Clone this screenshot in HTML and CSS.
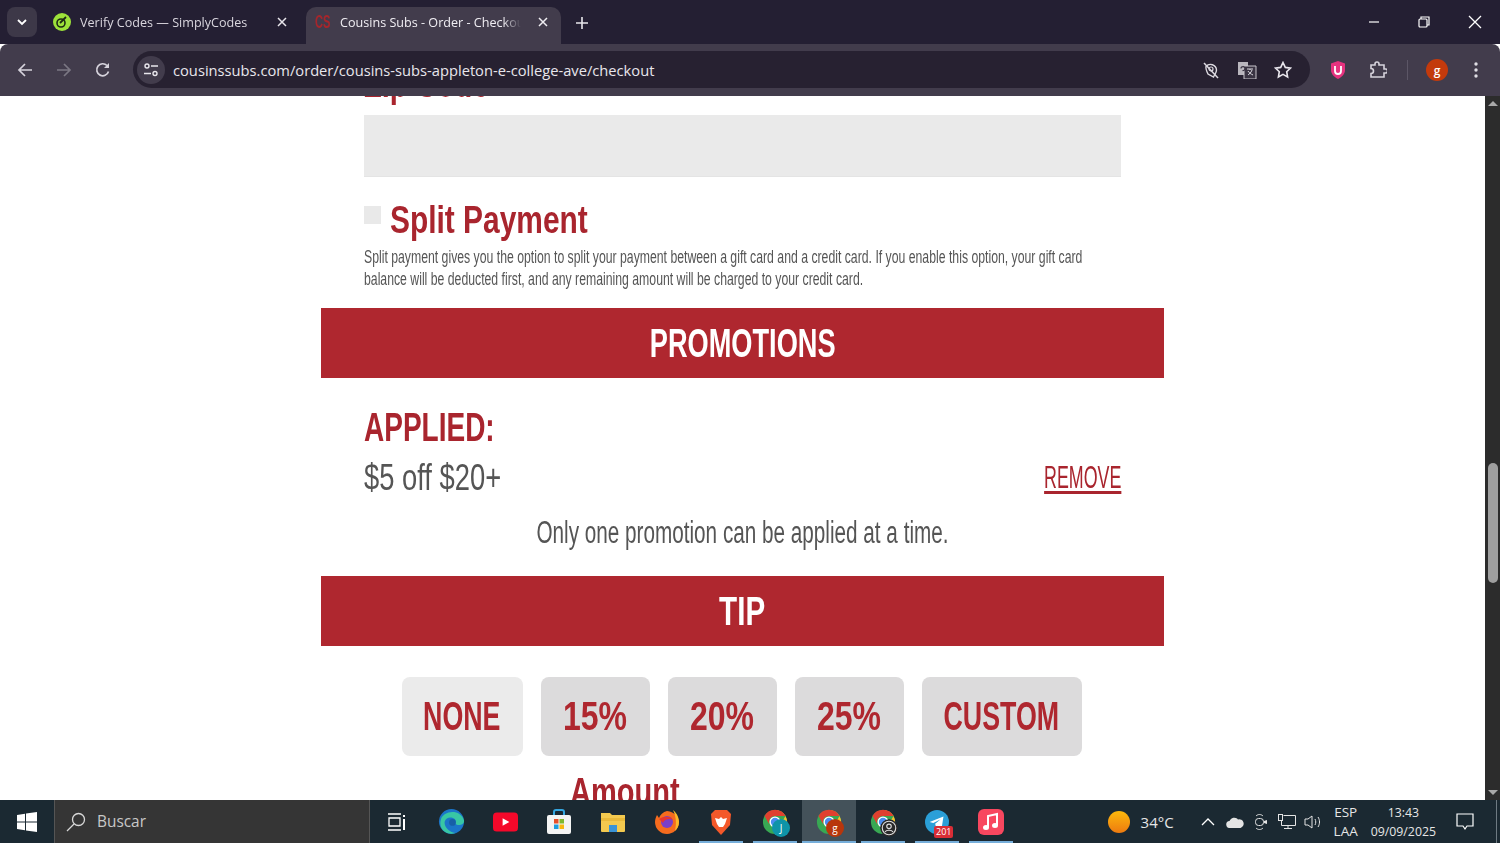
FILE: index.html
```html
<!DOCTYPE html>
<html lang="en">
<head>
    <meta charset="UTF-8">
    <meta name="viewport" content="width=device-width, initial-scale=1.0">
    <title>Cousins Subs - Order - Checkout</title>
    <link rel="stylesheet" href="styles.css">
</head>
<body>
    <div class="tabstrip">
        <div class="tab-search">
            <svg width="12" height="12" viewBox="0 0 12 12"><path d="M2 4l4 4 4-4" fill="none" stroke="#fff" stroke-width="1.8"/></svg>
        </div>
        <div class="tab">
            <svg class="tab-icon" width="18" height="18" viewBox="0 0 18 18"><circle cx="9" cy="9" r="9" fill="#9de23a"/><circle cx="8" cy="10" r="4" fill="none" stroke="#1d2a14" stroke-width="1.6"/><path d="M7 10l6-6" stroke="#1d2a14" stroke-width="1.8"/></svg>
            <span class="tab-title">Verify Codes — SimplyCodes</span>
            <svg class="tab-close" width="10" height="10" viewBox="0 0 10 10"><path d="M1 1l8 8M9 1l-8 8" stroke="#e8e6ec" stroke-width="1.5"/></svg>
        </div>
        <div class="tab tab-active">
            <span class="tab-favicon"><span class="favicon-text">CS</span></span>
            <span class="tab-title">Cousins Subs - Order - Checkout</span>
            <svg class="tab-close" width="10" height="10" viewBox="0 0 10 10"><path d="M1 1l8 8M9 1l-8 8" stroke="#f0eef3" stroke-width="1.5"/></svg>
        </div>
        <svg class="new-tab" width="12" height="12" viewBox="0 0 12 12"><path d="M6 0v12M0 6h12" stroke="#e8e6ec" stroke-width="1.6"/></svg>
        <div class="window-controls">
            <svg width="12" height="12" viewBox="0 0 12 12"><path d="M1 6h10" stroke="#fff" stroke-width="1.2"/></svg>
            <svg width="12" height="12" viewBox="0 0 12 12"><path d="M3 3V1h8v8H9" fill="none" stroke="#fff" stroke-width="1.2"/><rect x="1" y="3" width="8" height="8" rx="1" fill="none" stroke="#fff" stroke-width="1.2"/></svg>
            <svg width="14" height="14" viewBox="0 0 14 14"><path d="M1 1l12 12M13 1L1 13" stroke="#fff" stroke-width="1.3"/></svg>
        </div>
    </div>

    <div class="toolbar">
        <div class="nav-buttons">
            <svg width="16" height="16" viewBox="0 0 16 16"><path d="M15 8H2M8 2L2 8l6 6" fill="none" stroke="#d6d3dc" stroke-width="1.7"/></svg>
            <svg width="16" height="16" viewBox="0 0 16 16"><path d="M1 8h13M8 2l6 6-6 6" fill="none" stroke="#7b7783" stroke-width="1.7"/></svg>
            <svg width="16" height="16" viewBox="0 0 16 16"><path d="M13.5 9.5A6 6 0 1 1 12 3.5" fill="none" stroke="#d6d3dc" stroke-width="1.7"/><path d="M14 1v5H9z" fill="#d6d3dc"/></svg>
        </div>
        <div class="omnibox">
            <div class="site-info">
                <svg width="16" height="16" viewBox="0 0 16 16"><circle cx="4" cy="4" r="2" fill="none" stroke="#e8e6ec" stroke-width="1.4"/><path d="M8 4h7M1 11.5h7" stroke="#e8e6ec" stroke-width="1.4"/><circle cx="12" cy="11.5" r="2" fill="none" stroke="#e8e6ec" stroke-width="1.4"/></svg>
            </div>
            <span class="url">cousinssubs.com/order/cousins-subs-appleton-e-college-ave/checkout</span>
            <div class="omni-icons">
                <svg width="18" height="18" viewBox="0 0 18 18"><path d="M4 5.5A6 6 0 0 1 14.5 9c0 3-2 4.500-3 7L6 13C5 11 3.500 8 4 5.500z" fill="none" stroke="#dcd9e0" stroke-width="1.4"/><circle cx="9" cy="8" r="2" fill="none" stroke="#dcd9e0" stroke-width="1.2"/><path d="M2 2l14 15" stroke="#dcd9e0" stroke-width="1.5"/></svg>
                <svg width="20" height="18" viewBox="0 0 20 18"><path d="M1 1h10v13H1z" fill="#b9b6bd"/><path d="M7 5h12v13H7z" fill="#3a3443" stroke="#c9c6cd" stroke-width="1"/><path d="M4 7.500a2 2 0 1 1 1.500 2" fill="none" stroke="#3a3443" stroke-width="1.2"/><path d="M10 8h6M13 8v1M15 9c-1 3-3 4-4 5M11 10c1 2 3 3 5 4" fill="none" stroke="#dcd9e0" stroke-width="1"/></svg>
                <svg width="18" height="18" viewBox="0 0 18 18"><path d="M9 1.500l2.300 4.900 5.200.7-3.800 3.600.9 5.300L9 13.400 4.400 16l.9-5.300L1.500 7.100l5.200-.7z" fill="none" stroke="#e8e6ec" stroke-width="1.6"/></svg>
            </div>
        </div>
        <div class="extensions">
            <svg class="ext-shield" width="16" height="18" viewBox="0 0 16 18"><path d="M8 0l7 2.500V9c0 4-3 7-7 9-4-2-7-5-7-9V2.500z" fill="#e6337f"/><path d="M5 5v5a3 3 0 0 0 6 0V5" fill="none" stroke="#fff" stroke-width="1.800"/></svg>
            <svg class="ext-puzzle" width="18" height="18" viewBox="0 0 18 18"><path d="M2 4h4V3a2 2 0 0 1 4 0v1h5v4h1.500a2 2 0 0 1 0 4H15v4H2v-3.500a2 2 0 0 0 0-5z" fill="none" stroke="#d6d3dc" stroke-width="1.600"/></svg>
            <span class="ext-divider"></span>
            <span class="avatar">g</span>
            <svg class="menu-dots" width="4" height="16" viewBox="0 0 4 16"><circle cx="2" cy="2" r="1.700" fill="#e0dee4"/><circle cx="2" cy="8" r="1.700" fill="#e0dee4"/><circle cx="2" cy="14" r="1.700" fill="#e0dee4"/></svg>
        </div>
    </div>

    <div class="viewport">
        <div class="page">
            <div class="checkout">
                <div class="section">
                    <h3 class="field-label"><span class="narrow">Zip Code</span></h3>
                    <div class="text-input"></div>
                    <div class="split-row">
                        <span class="checkbox"></span>
                        <span class="split-title narrow">Split Payment</span>
                    </div>
                    <p class="split-note">Split payment gives you the option to split your payment between a gift card and a credit card. If you enable this option, your gift card balance will be deducted first, and any remaining amount will be charged to your credit card.</p>
                </div>

                <h2 class="band"><span class="band-text band-promo">PROMOTIONS</span></h2>
                <div class="section promo">
                    <h3 class="applied"><span class="applied-text">APPLIED:</span></h3>
                    <div class="promo-row">
                        <span class="promo-name">$5 off $20+</span>
                        <a class="remove" href="#">REMOVE</a>
                    </div>
                    <p class="promo-note"><span class="promo-note-text">Only one promotion can be applied at a time.</span></p>
                </div>

                <h2 class="band"><span class="band-text band-tip">TIP</span></h2>
                <div class="tip-options">
                    <button class="tip tip-none"><span class="tip-word">NONE</span></button>
                    <button class="tip tip-pct"><span class="tip-num">15%</span></button>
                    <button class="tip tip-pct"><span class="tip-num">20%</span></button>
                    <button class="tip tip-pct"><span class="tip-num">25%</span></button>
                    <button class="tip tip-custom"><span class="tip-word">CUSTOM</span></button>
                </div>
                <div class="amount-label"><span class="narrow">Amount</span></div>
            </div>
        </div>
        <div class="scrollbar">
            <span class="arrow-up"></span>
            <div class="scroll-track"><div class="scroll-thumb"></div></div>
            <span class="arrow-down"></span>
        </div>
    </div>

    <div class="taskbar">
        <div class="start">
            <svg width="20" height="20" viewBox="0 0 20 20"><path d="M0 3l8-1.200V9.500H0zM9 1.600L20 0v9.500H9zM0 10.500h8v7.700L0 17zM9 10.500h11V20L9 18.400z" fill="#fff"/></svg>
        </div>
        <div class="search">
            <svg width="20" height="20" viewBox="0 0 20 20"><circle cx="12.500" cy="7.500" r="6" fill="none" stroke="#d8d8d8" stroke-width="1.300"/><path d="M8 12l-7 7" stroke="#d8d8d8" stroke-width="1.300"/></svg>
            <span>Buscar</span>
        </div>
        <div class="task-item">
            <svg width="20" height="18" viewBox="0 0 20 18"><path d="M1 1h13M1 17h13M2 5h11v8H2z" fill="none" stroke="#fff" stroke-width="1.300"/><path d="M17 2v2M17 6v11" stroke="#fff" stroke-width="2"/></svg>
        </div>
        <div class="task-item">
            <svg width="27" height="27" viewBox="0 0 28 28"><circle cx="14" cy="14" r="13" fill="#1b75c9"/><path d="M3 12C5 3 23 0 27 13c.5 5-7 6-9 3 3-6-9-9-11-2-1 5 4 11 11 12C9 29 0 22 3 12z" fill="#38c6a4"/><circle cx="15" cy="15" r="3.500" fill="#175fa8"/></svg>
        </div>
        <div class="task-item">
            <svg width="25" height="20" viewBox="0 0 26 20"><rect width="26" height="20" rx="4" fill="#f5082a"/><path d="M10 6l7 4-7 4z" fill="#fff"/></svg>
        </div>
        <div class="task-item">
            <svg width="26" height="26" viewBox="0 0 26 26"><path d="M8 6V3a2 2 0 0 1 2-2h6a2 2 0 0 1 2 2v3" fill="none" stroke="#35a6e0" stroke-width="2"/><rect x="1" y="6" width="24" height="19" rx="2" fill="#f4f4f4"/><rect x="8" y="10" width="4.500" height="4.500" fill="#e8502a"/><rect x="13.500" y="10" width="4.500" height="4.500" fill="#7db92e"/><rect x="8" y="15.500" width="4.500" height="4.500" fill="#1f9de0"/><rect x="13.500" y="15.500" width="4.500" height="4.500" fill="#f6b80f"/></svg>
        </div>
        <div class="task-item">
            <svg width="24" height="22" viewBox="0 0 24 22"><path d="M0 2h9l2 2h13v16a1 1 0 0 1-1 1H1a1 1 0 0 1-1-1z" fill="#f3c94f"/><path d="M0 7h24v3H0z" fill="#e9b93a"/><path d="M8 14h8v7H8z" fill="#3a93d6"/></svg>
        </div>
        <div class="task-item">
            <svg width="26" height="26" viewBox="0 0 26 26"><path d="M13 25A12 12 0 0 1 1 13c0-3 1-5 2-7l2 3c1-3 4-6 8-7 8 1 12 6 12 12a12 12 0 0 1-12 11z" fill="#f66c1e"/><path d="M19 1c5 4 6 9 6 12 0 4-2 7-4 9 1-5 2-13-2-21z" fill="#fbb829"/><circle cx="13" cy="13" r="6" fill="#7b3fc9"/><path d="M5 10c5-3 12-3 14 1-3-2-9-1-10 3z" fill="#e8352f"/></svg>
        </div>
        <div class="task-item">
            <svg width="22" height="26" viewBox="0 0 22 26"><path d="M5 1h12l4 4-1 11-9 10-9-10L1 5z" fill="#f4582a"/><path d="M5 9l4 1 2-2 2 2 4-1-2 6-2 3h-4l-2-3z" fill="#fff"/><path d="M9 19h4l-2 2z" fill="#f4582a"/></svg>
        </div>
        <div class="task-item">
            <svg class="chrome" width="26" height="26" viewBox="0 0 28 28"><use href="#chrome-logo"/></svg>
            <span class="app-badge badge-j">J</span>
        </div>
        <div class="task-item task-active">
            <svg class="chrome" width="26" height="26" viewBox="0 0 28 28"><use href="#chrome-logo"/></svg>
            <span class="app-badge badge-g">g</span>
        </div>
        <div class="task-item">
            <svg class="chrome" width="26" height="26" viewBox="0 0 28 28"><use href="#chrome-logo"/></svg>
            <svg class="app-badge badge-person" viewBox="0 0 16 16"><circle cx="8" cy="8" r="8" fill="#2a2a2a"/><circle cx="8" cy="8" r="6" fill="none" stroke="#ddd"/><circle cx="8" cy="6.500" r="2" fill="none" stroke="#ddd"/><path d="M4.500 11.500c1-2 6-2 7 0" fill="none" stroke="#ddd"/></svg>
        </div>
        <div class="task-item">
            <svg width="24" height="24" viewBox="0 0 26 26"><circle cx="13" cy="13" r="13" fill="#2a9fd8"/><path d="M5 13l15-6-2 13-4-3-2 2-1-4 6-5-8 4z" fill="#fff"/></svg>
            <span class="count-badge">201</span>
        </div>
        <div class="task-item">
            <svg width="26" height="26" viewBox="0 0 26 26"><rect width="26" height="26" rx="6" fill="#f8475f"/><path d="M10 18V7l9-2v11" fill="none" stroke="#fff" stroke-width="2"/><ellipse cx="8" cy="18.500" rx="3" ry="2.500" fill="#fff"/><ellipse cx="17" cy="16.500" rx="3" ry="2.500" fill="#fff"/></svg>
        </div>

        <div class="tray">
            <span class="weather-sun"></span>
            <span class="weather-temp">34°C</span>
            <svg class="tray-chevron" width="14" height="8" viewBox="0 0 14 8"><path d="M1 7l6-6 6 6" fill="none" stroke="#fff" stroke-width="1.300"/></svg>
            <svg class="tray-icon" width="18" height="12" viewBox="0 0 18 12"><path d="M4 12a3.500 3.500 0 0 1-.5-7A5 5 0 0 1 12 3.500 4 4 0 0 1 14.500 12z" fill="#e4e4e4"/></svg>
            <svg class="tray-icon" width="14" height="18" viewBox="0 0 14 18"><path d="M2 3c2-2 5-2 7 0M2 15c2 2 5 2 7 0" fill="none" stroke="#e4e4e4"/><rect x="1.500" y="5.500" width="8" height="7" rx="3" fill="none" stroke="#e4e4e4"/><path d="M10 8l3-1v4l-3-1z" fill="#e4e4e4"/></svg>
            <svg class="tray-icon" width="18" height="16" viewBox="0 0 18 16"><path d="M5.500 1.500h12v10h-14V7M10 11.500v3M6 14.500h8" fill="none" stroke="#e4e4e4"/><rect x=".5" y=".5" width="4" height="6" fill="#1b2932" stroke="#e4e4e4"/></svg>
            <svg class="tray-icon tray-volume" width="18" height="16" viewBox="0 0 18 16"><path d="M1 5h3l4-3v12l-4-3H1zM11 5c1 2 1 4 0 6M14 3c2 3 2 7 0 10" fill="none" stroke="#e4e4e4"/></svg>
            <div class="tray-lang"><span>ESP</span><span>LAA</span></div>
            <div class="tray-clock"><span>13:43</span><span>09/09/2025</span></div>
            <svg class="tray-notify" width="18" height="18" viewBox="0 0 18 18"><path d="M1 1h16v12h-6l-2 3-2-3H1z" fill="none" stroke="#fff" stroke-width="1.200"/></svg>
            <span class="show-desktop"></span>
        </div>
    </div>

    <svg class="svg-defs" width="0" height="0">
        <defs>
            <g id="chrome-logo">
                <circle cx="14" cy="14" r="13" fill="#38a853"/>
                <path d="M14 1a13 13 0 0 1 11.300 6.500H14z" fill="#f2c230"/>
                <path d="M25.300 7.500A13 13 0 0 1 15 27l5-10z" fill="#f2c230"/>
                <path d="M2.700 7.500A13 13 0 0 1 25.300 7.500H14a6.500 6.500 0 0 0-5.700 9.700z" fill="#e0402f"/>
                <circle cx="14" cy="14" r="6" fill="#fff"/>
                <circle cx="14" cy="14" r="4.500" fill="#4a8df0"/>
            </g>
        </defs>
    </svg>
</body>
</html>
```
FILE: styles.css
```css
* {
    box-sizing: border-box;
}
html, body {
    height: 100%;
}
body {
    margin: 0;
    display: flex;
    flex-direction: column;
    overflow: hidden;
    font-family: "Liberation Sans", sans-serif;
    background: #fff;
}
.svg-defs {
    position: absolute;
}

/* browser tabs */
.tabstrip {
    height: 44px;
    flex: none;
    display: flex;
    align-items: flex-end;
    background: #241f33;
    font-family: "Open Sans", sans-serif;
    font-size: 12.6px;
    color: #d9d6de;
}
.tab-search {
    width: 30px;
    height: 30px;
    margin: 0 7px 7px 7px;
    border-radius: 8px;
    background: #3d3848;
    display: flex;
    align-items: center;
    justify-content: center;
}
.tab {
    width: 262px;
    height: 37px;
    padding: 0 19px 7px 9px;
    display: flex;
    align-items: center;
    gap: 9px;
}
.tab-active {
    width: 255px;
    padding-right: 13px;
    background: #423c4c;
    border-radius: 10px 10px 0 0;
    color: #f0eef3;
}
.tab-title {
    flex: 1;
    white-space: nowrap;
    overflow: hidden;
    mask-image: linear-gradient(to right, #000 90%, transparent);
}
.tab-active .tab-title {
    margin-right: 8px;
}
.tab-favicon {
    width: 16px;
    flex: none;
    font-family: "Liberation Sans", sans-serif;
    font-size: 18px;
    font-weight: 700;
    color: #a5262c;
}
.favicon-text {
    display: inline-block;
    transform: scaleX(.62);
    transform-origin: left;
}
.new-tab {
    margin: 0 0 15px 15px;
}
.window-controls {
    margin-left: auto;
    height: 44px;
    width: 132px;
    padding-right: 18px;
    display: flex;
    align-items: center;
    justify-content: space-between;
}

/* address bar */
.toolbar {
    height: 52px;
    flex: none;
    display: flex;
    align-items: center;
    background: #423c4c;
    border-radius: 8px 8px 0 0;
}
.nav-buttons {
    width: 133px;
    padding: 0 22px 0 17px;
    display: flex;
    justify-content: space-between;
}
.omnibox {
    width: 1177px;
    height: 37px;
    margin-bottom: 1px;
    padding: 0 18px 0 4px;
    border-radius: 19px;
    background: #272131;
    display: flex;
    align-items: center;
}
.site-info {
    width: 28px;
    height: 28px;
    border-radius: 50%;
    background: #423c4c;
    display: flex;
    align-items: center;
    justify-content: center;
}
.url {
    margin-left: 8px;
    font-family: "Open Sans", sans-serif;
    font-size: 14.7px;
    color: #e8e6ec;
}
.omni-icons {
    margin-left: auto;
    display: flex;
    align-items: center;
    gap: 17px;
}
.extensions {
    flex: 1;
    display: flex;
    align-items: center;
    padding-left: 20px;
}
.ext-puzzle {
    margin-left: 23px;
}
.ext-divider {
    width: 1px;
    height: 20px;
    background: #5c5666;
    margin: 0 18px 0 20px;
}
.avatar {
    width: 22px;
    height: 22px;
    border-radius: 50%;
    background: #c33a0c;
    color: #fff;
    font-family: "Open Sans", sans-serif;
    font-size: 12px;
    font-weight: 600;
    display: flex;
    align-items: center;
    justify-content: center;
}
.menu-dots {
    margin-left: 26px;
}

/* page, the site's condensed face is made by squeezing Liberation Sans */
.viewport {
    height: 704px;
    flex: none;
    display: flex;
    overflow: hidden;
}
.page {
    flex: 1;
    overflow: hidden;
    display: flex;
    justify-content: center;
}
.checkout {
    width: 843px;
    margin-top: -36px;
}
.section {
    padding: 0 43px;
}
.narrow {
    display: inline-block;
    white-space: nowrap;
    transform: scaleX(.765);
    transform-origin: left;
}
.field-label {
    margin: 0 0 6px;
    height: 49px;
    font-size: 38px;
    line-height: 49px;
    font-weight: 700;
    color: #a9252e;
}
.text-input {
    height: 62px;
    background: #eaeaea;
    border-bottom: 1px solid #e4e4e4;
}
.split-row {
    display: flex;
    align-items: center;
    gap: 9px;
    margin-top: 18px;
    height: 50px;
}
.checkbox {
    width: 17px;
    height: 18px;
    margin-top: -10px;
    background: #e9e9e9;
}
.split-title {
    font-size: 38px;
    font-weight: 700;
    color: #a9252e;
    transform: scaleX(.787);
}
.split-note {
    margin: 0;
    padding-top: 1px;
    width: 1060px;
    font-size: 17.5px;
    line-height: 22px;
    color: #555;
    transform: scaleX(.7);
    transform-origin: left;
}
.band {
    margin: 0;
    height: 70px;
    background: #af272f;
    color: #fff;
    font-size: 40px;
    line-height: 70px;
    font-weight: 700;
    text-align: center;
}
.checkout .band:first-of-type {
    margin-top: 18px;
}
.band-text {
    display: inline-block;
}
.band-promo {
    transform: scaleX(.68);
}
.band-tip {
    transform: scaleX(.74);
}
.applied {
    margin: 0;
    padding-top: 26px;
    font-size: 40px;
    line-height: 46px;
    color: #a9252e;
}
.applied-text {
    display: inline-block;
    transform: scaleX(.7);
    transform-origin: left;
}
.promo-row {
    display: flex;
    justify-content: space-between;
    align-items: center;
    height: 50px;
    margin-top: 3px;
    color: #555;
}
.promo-name {
    font-size: 36px;
    transform: scaleX(.76);
    transform-origin: left;
}
.remove {
    font-size: 31px;
    color: #a9252e;
    text-underline-offset: 3px;
    transform: scaleX(.575);
    transform-origin: right;
}
.promo-note {
    margin: 8px 0 21px;
    height: 44px;
    line-height: 44px;
    text-align: center;
    font-size: 31px;
    color: #555;
}
.promo-note-text {
    display: inline-block;
    white-space: nowrap;
    transform: scaleX(.668);
}
.tip-options {
    display: flex;
    justify-content: center;
    gap: 18px;
    margin-top: 31px;
    padding-right: 2px;
}
.tip {
    height: 79px;
    padding: 0;
    border: none;
    border-radius: 8px;
    background: #dcdbdc;
    color: #af272f;
    font-family: inherit;
    font-size: 40px;
    font-weight: 700;
    display: flex;
    align-items: center;
    justify-content: center;
}
.tip span {
    flex: none;
}
.tip-word {
    transform: scaleX(.67);
}
.tip-num {
    transform: scaleX(.8);
}
.tip-none {
    width: 121px;
    background: #ebebeb;
}
.tip-pct {
    width: 109px;
}
.tip-custom {
    width: 160px;
}
.amount-label {
    width: 500px;
    margin: 15px 0 0 249px;
    font-size: 38px;
    font-weight: 700;
    color: #a9252e;
}

/* page scrollbar */
.scrollbar {
    width: 15px;
    flex: none;
    display: flex;
    flex-direction: column;
    align-items: center;
    background: #2c2c2c;
}
.arrow-up, .arrow-down {
    width: 0;
    height: 0;
    flex: none;
    border-left: 5px solid transparent;
    border-right: 5px solid transparent;
}
.arrow-up {
    margin: 5px 0 3px;
    border-bottom: 5px solid #a8a8a8;
}
.arrow-down {
    margin: 3px 0 5px;
    border-top: 5px solid #a8a8a8;
}
.scroll-track {
    flex: 1;
    width: 100%;
    padding-top: 354px;
    display: flex;
    justify-content: center;
}
.scroll-thumb {
    width: 10px;
    height: 120px;
    border-radius: 5px;
    background: #9f9f9f;
}

/* windows taskbar */
.taskbar {
    height: 43px;
    flex: none;
    display: flex;
    align-items: center;
    background: #1b2932;
    color: #e6e6e6;
    font-family: "Open Sans", sans-serif;
}
.start {
    width: 54px;
    display: flex;
    justify-content: center;
}
.search {
    width: 316px;
    height: 43px;
    padding-left: 11px;
    display: flex;
    align-items: center;
    gap: 11px;
    background: #353535;
    border-left: 1px solid #555;
    border-right: 1px solid #555;
    font-size: 15.4px;
    color: #c8c8c8;
}
.task-item {
    position: relative;
    width: 54px;
    height: 43px;
    display: flex;
    align-items: center;
    justify-content: center;
}
.task-item:nth-of-type(n+9)::after {
    content: "";
    position: absolute;
    left: 5px;
    right: 5px;
    bottom: 0;
    height: 2px;
    background: #76aeda;
}
.task-active {
    background: #44525a;
}
.task-active::after {
    left: 0 !important;
    right: 0 !important;
}
.app-badge {
    position: absolute;
    left: 24px;
    top: 19px;
    width: 18px;
    height: 18px;
    border-radius: 50%;
    font-size: 10px;
    line-height: 18px;
    text-align: center;
    color: #fff;
}
.badge-j {
    background: #0f94a8;
}
.badge-g {
    background: #b8360c;
}
.count-badge {
    position: absolute;
    left: 24px;
    top: 26px;
    padding: 0 2px;
    border-radius: 2px;
    background: #d92d36;
    color: #fff;
    font-size: 9px;
    line-height: 12px;
}
.tray {
    margin-left: auto;
    height: 43px;
    display: flex;
    align-items: center;
    font-size: 15px;
    position: relative;
}
.weather-sun {
    width: 22px;
    height: 22px;
    border-radius: 50%;
    background: linear-gradient(#fdb90c, #ed7a10);
}
.weather-temp {
    margin-left: 11px;
    width: 36px;
    white-space: nowrap;
}
.tray-chevron {
    margin-left: 24px;
}
.tray-icon {
    margin-left: 10px;
}
.tray-chevron + .tray-icon {
    margin-left: 11px;
}
.tray-volume {
    margin-left: 8px;
}
.tray-lang, .tray-clock {
    display: flex;
    flex-direction: column;
    align-items: center;
    line-height: 19px;
}
.tray-lang {
    margin-left: 12px;
    font-size: 13.5px;
}
.tray-clock {
    margin-left: 13px;
    font-size: 12.3px;
}
.tray-notify {
    margin: 0 26px 0 20px;
}
.show-desktop {
    position: absolute;
    right: 3px;
    top: 0;
    width: 1px;
    height: 43px;
    background: #6e7a82;
}
```
